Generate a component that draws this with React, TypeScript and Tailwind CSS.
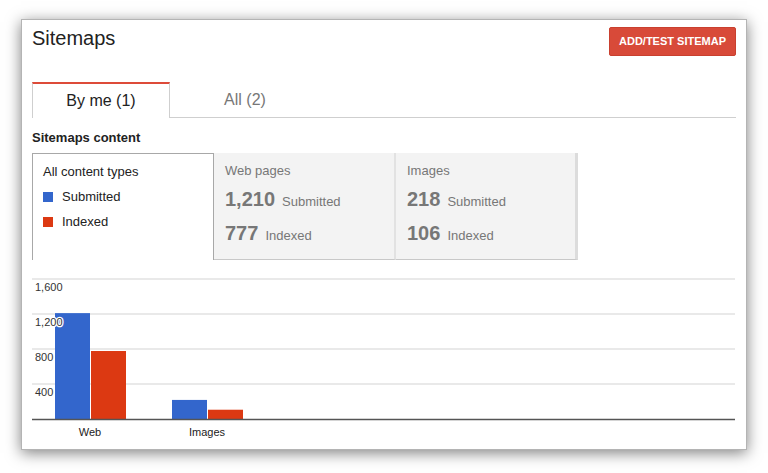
import React from "react";

const BLUE = "#3366cc";
const RED = "#dc3912";

interface Series { label: string; submitted: number; indexed: number }

const SERIES: Series[] = [
  { label: "Web", submitted: 1210, indexed: 777 },
  { label: "Images", submitted: 218, indexed: 106 },
];

// chart geometry, in svg-local pixels
const AXIS_Y = 149;
const PX_PER_UNIT = 140 / 1600;
const GRID = [1600, 1200, 800, 400];

function Chart() {
  const groupX = [23, 140];
  return (
    <svg width={703} height={175} className="block" style={{ fontFamily: '"Liberation Sans", Arial, sans-serif' }}>
      {GRID.map((v) => {
        const y = AXIS_Y - v * PX_PER_UNIT;
        return <line key={v} x1={0} x2={703} y1={y} y2={y} stroke="#d3d3d3" strokeWidth={1} />;
      })}
      {SERIES.map((s, i) => {
        const x = groupX[i];
        const hs = s.submitted * PX_PER_UNIT;
        const hi = s.indexed * PX_PER_UNIT;
        return (
          <g key={s.label}>
            <rect x={x} y={AXIS_Y - hs} width={35} height={hs} fill={BLUE} />
            <rect x={x + 36} y={AXIS_Y - hi} width={35} height={hi} fill={RED} />
            <text x={x + 35} y={166} textAnchor="middle" fontSize={11} fill="#222">
              {s.label}
            </text>
          </g>
        );
      })}
      {GRID.map((v) => {
        const y = AXIS_Y - v * PX_PER_UNIT + 12;
        return (
          <text
            key={v}
            x={3}
            y={y}
            fontSize={11}
            fill="#333"
            stroke="#fff"
            strokeWidth={2.5}
            paintOrder="stroke"
          >
            {v.toLocaleString("en-US")}
          </text>
        );
      })}
      <line x1={0} x2={703} y1={AXIS_Y + 0.5} y2={AXIS_Y + 0.5} stroke="#555" strokeWidth={1.5} />
    </svg>
  );
}

function StatBox({ title, submitted, indexed, last }: { title: string; submitted: string; indexed: string; last?: boolean }) {
  return (
    <div
      className={
        "w-[182px] bg-[#f3f3f3] border-b border-[#c8c8c8] pl-[11px] pt-[10px] " +
        (last ? "border-r-[3px] border-r-[#dcdcdc]" : "border-r-2 border-r-[#e2e2e2]")
      }
    >
      <div className="text-[13px] leading-[16px] text-[#777]">{title}</div>
      <div className="mt-[8px] flex items-baseline gap-[7px] text-[#777]">
        <span className="text-[20px] leading-[24px] font-bold">{submitted}</span>
        <span className="text-[13px]">Submitted</span>
      </div>
      <div className="mt-[9px] flex items-baseline gap-[7px] text-[#777]">
        <span className="text-[20px] leading-[24px] font-bold">{indexed}</span>
        <span className="text-[13px]">Indexed</span>
      </div>
    </div>
  );
}

export default function App() {
  return (
    <div
      className="w-[768px] h-[473px] bg-white pt-[19px] pl-[21px]"
      style={{ fontFamily: '"Liberation Sans", Arial, sans-serif' }}
    >
      <div className="w-[726px] h-[431px] border border-[#b4b4b4] bg-white shadow-[0_3px_14px_rgba(0,0,0,0.5)] px-[10px] pt-[7px]">
        <div className="flex items-start justify-between">
          <h1 className="text-[20px] leading-[24px] text-[#222] mt-[-1px]">Sitemaps</h1>
          <button className="h-[29px] w-[127px] rounded-[2px] border border-[#c9402f] bg-[#d84a39] text-[11px] font-bold text-white">
            ADD/TEST SITEMAP
          </button>
        </div>

        <div className="mt-[26px] flex h-[36px]">
          <div className="w-[138px] border-t-2 border-x border-t-[#dd4b39] border-x-[#cfcfcf] flex items-center justify-center text-[16px] text-[#222]">
            By me (1)
          </div>
          <div className="flex-1 border-b border-[#cfcfcf] flex">
            <div className="w-[150px] flex items-center justify-center text-[16px] text-[#777]">All (2)</div>
          </div>
        </div>

        <div className="mt-[12px] text-[13px] leading-[16px] font-bold text-[#222]">Sitemaps content</div>

        <div className="mt-[7px] flex h-[107px]">
          <div className="w-[182px] border-t border-x border-[#a8a8a8] bg-white pl-[10px] pt-[10px] text-[13px] text-[#222]">
            <div className="leading-[16px]">All content types</div>
            <div className="mt-[9px] flex items-center gap-[9px] leading-[16px]">
              <span className="h-[10px] w-[10px] bg-[#3366cc]" />
              Submitted
            </div>
            <div className="mt-[9px] flex items-center gap-[9px] leading-[16px]">
              <span className="h-[10px] w-[10px] bg-[#dc3912]" />
              Indexed
            </div>
          </div>
          <StatBox title="Web pages" submitted="1,210" indexed="777" />
          <StatBox title="Images" submitted="218" indexed="106" last />
        </div>

        <div className="mt-[10px]">
          <Chart />
        </div>
      </div>
    </div>
  );
}
